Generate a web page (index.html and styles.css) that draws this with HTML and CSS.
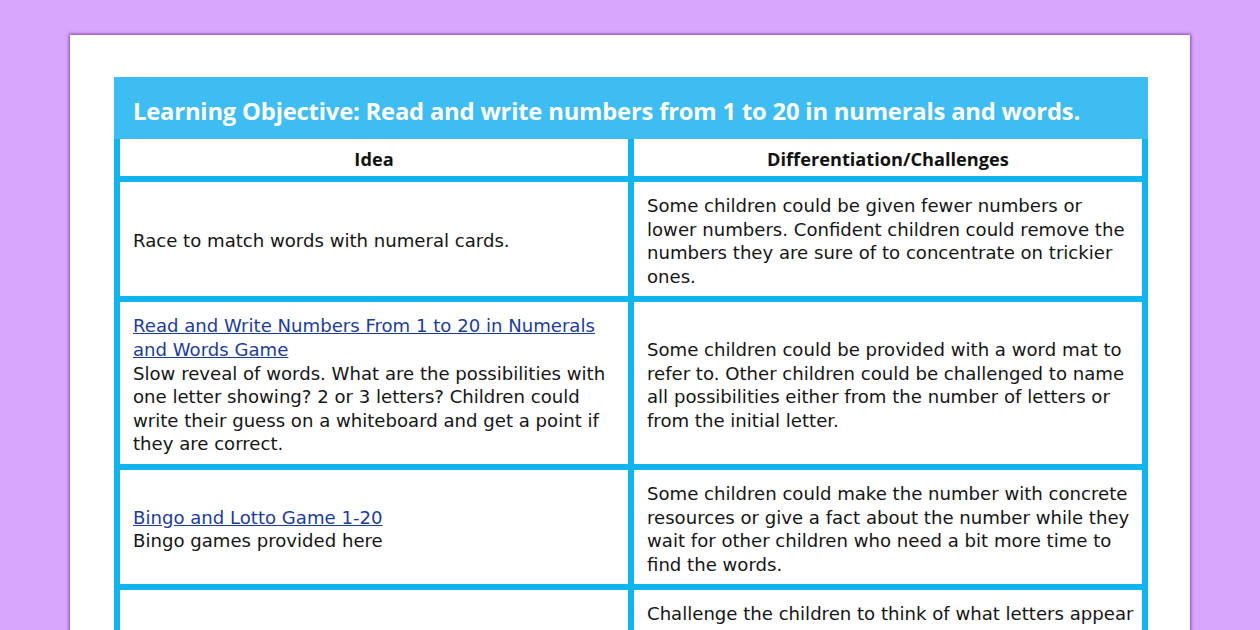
FILE: index.html
```html
<!DOCTYPE html>
<html lang="en">
<head>
<meta charset="utf-8">
<title>Learning Objective</title>
<link rel="stylesheet" href="styles.css">
</head>
<body>
<div class="paper">
  <div class="sheet">
    <div class="title">Learning Objective: Read and write numbers from 1 to 20 in numerals and words.</div>
    <div class="grid">
      <div class="cell head">Idea</div>
      <div class="cell head">Differentiation/Challenges</div>

      <div class="cell"><div>Race to match words with numeral cards.</div></div>
      <div class="cell"><div>Some children could be given fewer numbers or lower numbers. Confident children could remove the numbers they are sure of to concentrate on trickier ones.</div></div>

      <div class="cell"><div><a href="#">Read and Write Numbers From 1 to 20 in Numerals and Words Game</a><br>Slow reveal of words. What are the possibilities with one letter showing? 2 or 3 letters? Children could write their guess on a whiteboard and get a point if they are correct.</div></div>
      <div class="cell"><div>Some children could be provided with a word mat to refer to. Other children could be challenged to name all possibilities either from the number of letters or from the initial letter.</div></div>

      <div class="cell"><div><a href="#">Bingo and Lotto Game 1-20</a><br>Bingo games provided here</div></div>
      <div class="cell"><div>Some children could make the number with concrete resources or give a fact about the number while they wait for other children who need a bit more time to find the words.</div></div>

      <div class="cell"><div>Hangman using number words.</div></div>
      <div class="cell"><div>Challenge the children to think of what letters appear most common in the numbers 1 to 20 and to predict which ones to guess first.</div></div>
    </div>
  </div>
</div>
</body>
</html>
```
FILE: styles.css
```css
html, body {
  margin: 0;
  padding: 0;
  background: #d8a6fc;
  overflow: hidden;
  height: 630px;
}
body {
  padding: 35px 0 0 70px;
  box-sizing: border-box;
  font-family: "DejaVu Sans", "Open Sans", sans-serif;
}
.paper {
  width: 1120px;
  height: 700px;
  background: #ffffff;
  box-shadow: 0 0 3px 1px rgba(110, 40, 150, 0.75);
  padding: 42px 0 0 44px;
  box-sizing: border-box;
}
.sheet {
  width: 1034px;
  background: #10b5ef;
}
.title {
  background: #3dbdf1;
  height: 62px;
  box-sizing: border-box;
  padding: 19px 0 0 19px;
  color: #ffffff;
  font-family: "Open Sans", "Liberation Sans", sans-serif;
  font-weight: 700;
  font-size: 23.8px;
  line-height: 30px;
  letter-spacing: -0.2px;
  white-space: nowrap;
}
.grid {
  display: grid;
  grid-template-columns: 508px 508px;
  gap: 6px;
  padding: 0 6px 6px;
}
.cell {
  background: #ffffff;
  display: flex;
  align-items: center;
  padding: 12px 5px 8px 13px;
  font-size: 18.1px;
  line-height: 23.6px;
  color: #151515;
}
.cell.head {
  justify-content: center;
  font-family: "Open Sans", "Liberation Sans", sans-serif;
  font-weight: 700;
  height: 37px;
  box-sizing: border-box;
  padding: 4px 0 0;
  font-size: 18.2px;
  color: #111;
}
.cell a {
  color: #1d3c9c;
  text-decoration: underline;
}
```
